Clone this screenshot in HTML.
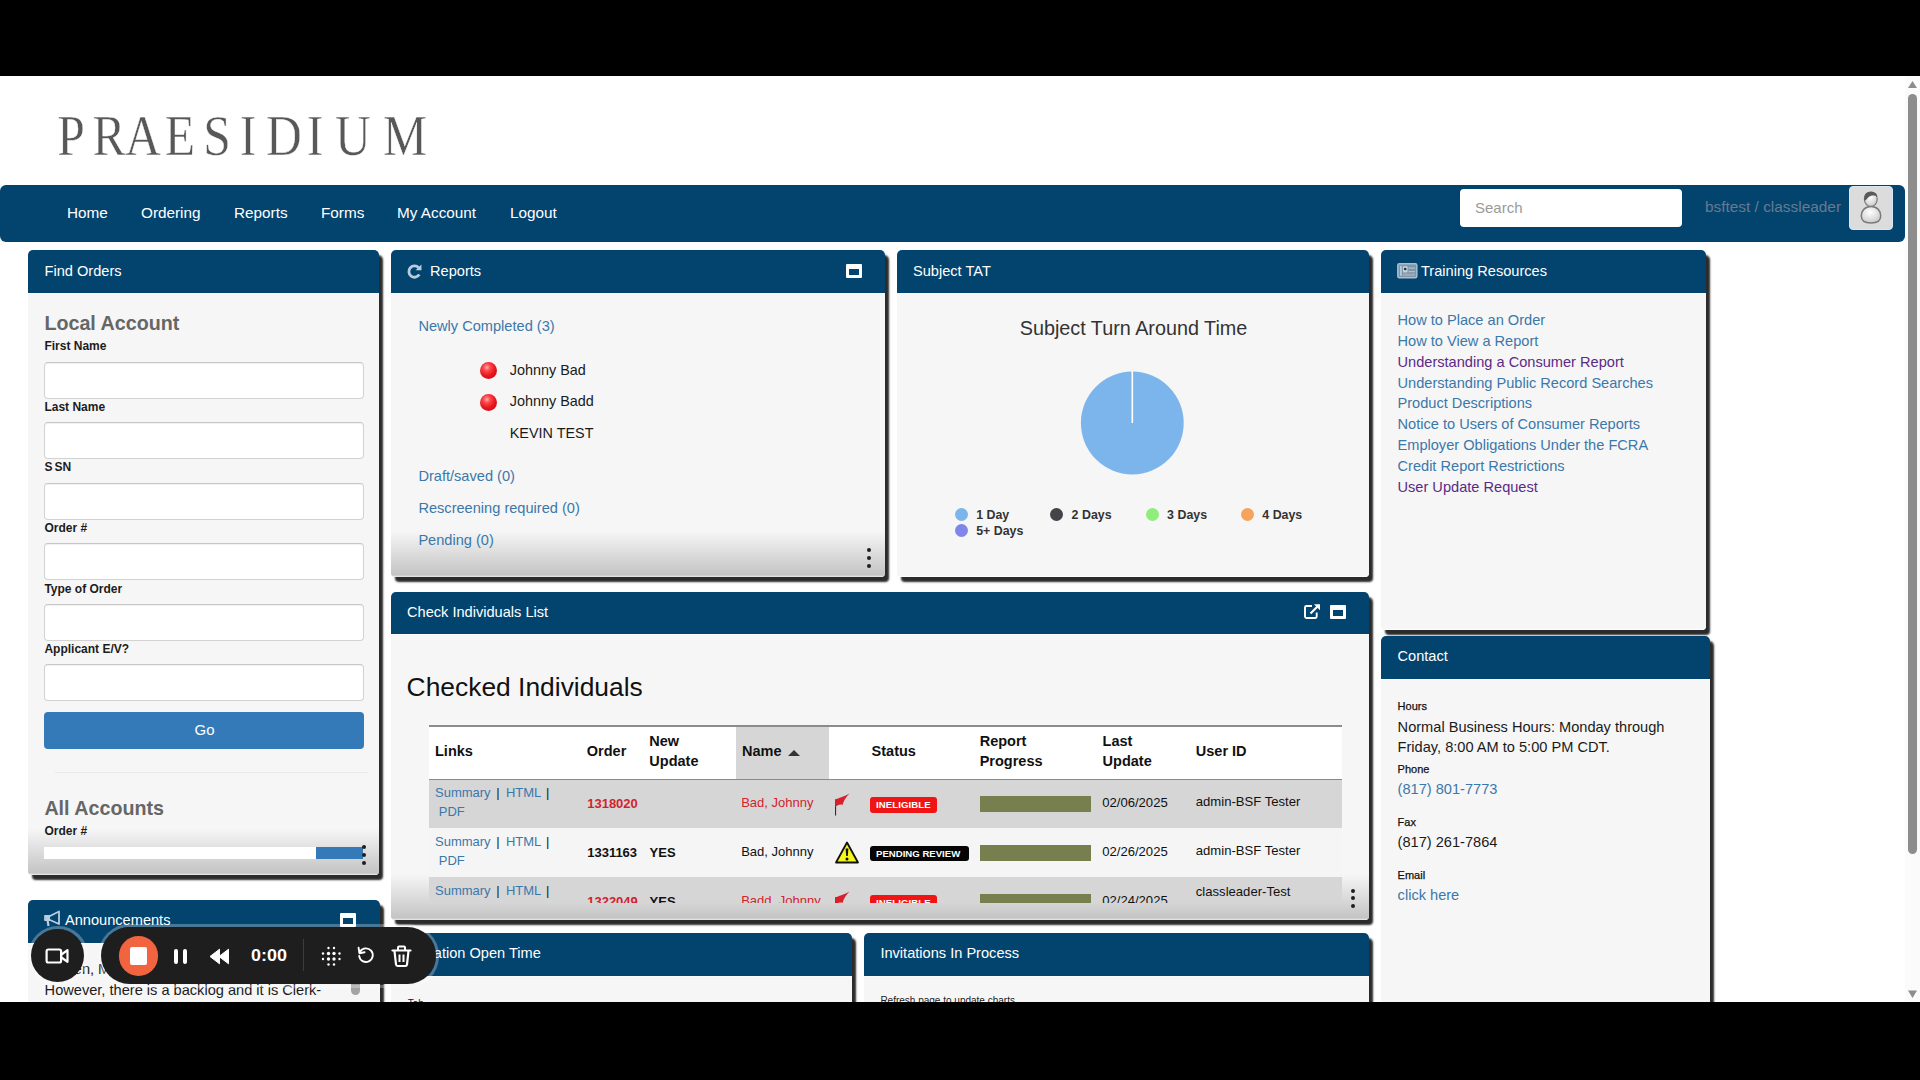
<!DOCTYPE html><html><head><meta charset="utf-8"><style>
html,body{margin:0;padding:0;background:#000;width:1920px;height:1080px;overflow:hidden;}
#pg{position:absolute;left:0;top:0;width:1920px;height:1080px;background:#fff;clip-path:inset(76px 0 78px 0);overflow:hidden;}
.t{position:absolute;white-space:nowrap;}
.r{position:absolute;box-sizing:border-box;}
svg{position:absolute;overflow:visible;}
</style></head><body><div id="pg">
<div class="t " style="left:71px;top:107.10px;font-size:57px;line-height:57px;color:#585858;font-weight:normal;font-family:'Liberation Serif', serif;transform:translateX(-50%) scaleX(0.87);-webkit-text-stroke:0.45px #fff;">P</div>
<div class="t " style="left:108.75px;top:107.10px;font-size:57px;line-height:57px;color:#585858;font-weight:normal;font-family:'Liberation Serif', serif;transform:translateX(-50%) scaleX(0.87);-webkit-text-stroke:0.45px #fff;">R</div>
<div class="t " style="left:143.15px;top:107.10px;font-size:57px;line-height:57px;color:#585858;font-weight:normal;font-family:'Liberation Serif', serif;transform:translateX(-50%) scaleX(0.87);-webkit-text-stroke:0.45px #fff;">A</div>
<div class="t " style="left:180px;top:107.10px;font-size:57px;line-height:57px;color:#585858;font-weight:normal;font-family:'Liberation Serif', serif;transform:translateX(-50%) scaleX(0.87);-webkit-text-stroke:0.45px #fff;">E</div>
<div class="t " style="left:217.25px;top:107.10px;font-size:57px;line-height:57px;color:#585858;font-weight:normal;font-family:'Liberation Serif', serif;transform:translateX(-50%) scaleX(0.87);-webkit-text-stroke:0.45px #fff;">S</div>
<div class="t " style="left:247.75px;top:107.10px;font-size:57px;line-height:57px;color:#585858;font-weight:normal;font-family:'Liberation Serif', serif;transform:translateX(-50%) scaleX(0.87);-webkit-text-stroke:0.45px #fff;">I</div>
<div class="t " style="left:284.2px;top:107.10px;font-size:57px;line-height:57px;color:#585858;font-weight:normal;font-family:'Liberation Serif', serif;transform:translateX(-50%) scaleX(0.87);-webkit-text-stroke:0.45px #fff;">D</div>
<div class="t " style="left:315.35px;top:107.10px;font-size:57px;line-height:57px;color:#585858;font-weight:normal;font-family:'Liberation Serif', serif;transform:translateX(-50%) scaleX(0.87);-webkit-text-stroke:0.45px #fff;">I</div>
<div class="t " style="left:352.5px;top:107.10px;font-size:57px;line-height:57px;color:#585858;font-weight:normal;font-family:'Liberation Serif', serif;transform:translateX(-50%) scaleX(0.87);-webkit-text-stroke:0.45px #fff;">U</div>
<div class="t " style="left:405.05px;top:107.10px;font-size:57px;line-height:57px;color:#585858;font-weight:normal;font-family:'Liberation Serif', serif;transform:translateX(-50%) scaleX(0.87);-webkit-text-stroke:0.45px #fff;">M</div>
<div class="r" style="left:0px;top:185px;width:1905px;height:57px;background:#03446f;border-radius:6px;"></div>
<div class="t " style="left:67px;top:204.85px;font-size:15.3px;line-height:15.3px;color:#fff;font-weight:normal;font-family:'Liberation Sans', sans-serif;">Home</div>
<div class="t " style="left:141px;top:204.85px;font-size:15.3px;line-height:15.3px;color:#fff;font-weight:normal;font-family:'Liberation Sans', sans-serif;">Ordering</div>
<div class="t " style="left:234px;top:204.85px;font-size:15.3px;line-height:15.3px;color:#fff;font-weight:normal;font-family:'Liberation Sans', sans-serif;">Reports</div>
<div class="t " style="left:321px;top:204.85px;font-size:15.3px;line-height:15.3px;color:#fff;font-weight:normal;font-family:'Liberation Sans', sans-serif;">Forms</div>
<div class="t " style="left:397px;top:204.85px;font-size:15.3px;line-height:15.3px;color:#fff;font-weight:normal;font-family:'Liberation Sans', sans-serif;">My Account</div>
<div class="t " style="left:510px;top:204.85px;font-size:15.3px;line-height:15.3px;color:#fff;font-weight:normal;font-family:'Liberation Sans', sans-serif;">Logout</div>
<div class="r" style="left:1460px;top:189px;width:222px;height:38px;background:#fff;border-radius:4px;"></div>
<div class="t " style="left:1475px;top:200.00px;font-size:15px;line-height:15px;color:#9a9a9a;font-weight:normal;font-family:'Liberation Sans', sans-serif;">Search</div>
<div class="t " style="left:1705px;top:198.80px;font-size:15.4px;line-height:15.4px;color:#677a8e;font-weight:normal;font-family:'Liberation Sans', sans-serif;">bsftest / classleader</div>
<div class="r" style="left:1849px;top:186px;width:44px;height:44px;background:#dcdcdc;border:1.5px solid #d6e8f7;border-radius:4px;"></div>
<svg style="left:1849px;top:186px" width="44" height="44" viewBox="0 0 44 44">
<defs><radialGradient id="bg1" cx="45%" cy="35%" r="70%"><stop offset="0" stop-color="#ffffff"/><stop offset="1" stop-color="#c8c8c8"/></radialGradient></defs>
<path d="M22 20.5 C15.5 20.5 12.3 25 12.3 30 C12.3 35 15.5 37 22 37 C28.5 37 31.7 35 31.7 30 C31.7 25 28.5 20.5 22 20.5 Z" fill="url(#bg1)" stroke="#7a7a7a" stroke-width="1.5"/>
<ellipse cx="21.8" cy="13.2" rx="6.4" ry="7.2" fill="url(#bg1)" stroke="#7a7a7a" stroke-width="1.2"/>
<path d="M15.3 14.5 C14.5 8.5 17.5 5.8 21.5 5.8 C25.5 5.8 28.5 7.5 28.2 11 C26 9.2 22 9 19.5 11.2 C18 12.5 17 14.5 15.3 14.5 Z" fill="#5a5a5a"/>
</svg>
<div class="r" style="left:28px;top:250px;width:351px;height:625px;border-radius:5px 5px 4px 4px;box-shadow:4px 5px 2px #2b2b2b;background:linear-gradient(to bottom, #f6f6f6 0, #f6f6f6 calc(100% - 46px), #c4c4c4 calc(100% - 2px), #ececec 100%);"></div>
<div class="r" style="left:28px;top:250px;width:351px;height:43px;border-radius:5px 5px 0 0;background:#03446f;"></div>
<div class="r" style="left:28px;top:293px;width:351px;height:1px;background:#fafafa;"></div>
<div class="r" style="left:391px;top:250px;width:494px;height:327px;border-radius:5px 5px 4px 4px;box-shadow:4px 5px 2px #2b2b2b;background:linear-gradient(to bottom, #f6f6f6 0, #f6f6f6 calc(100% - 46px), #c4c4c4 calc(100% - 2px), #ececec 100%);"></div>
<div class="r" style="left:391px;top:250px;width:494px;height:43px;border-radius:5px 5px 0 0;background:#03446f;"></div>
<div class="r" style="left:391px;top:293px;width:494px;height:1px;background:#fafafa;"></div>
<div class="r" style="left:897px;top:250px;width:472px;height:327px;border-radius:5px 5px 4px 4px;box-shadow:4px 5px 2px #2b2b2b;background:linear-gradient(to bottom, #f6f6f6 0, #f6f6f6 calc(100% - 1px), #fdfdfd calc(100% - 1px));"></div>
<div class="r" style="left:897px;top:250px;width:472px;height:43px;border-radius:5px 5px 0 0;background:#03446f;"></div>
<div class="r" style="left:897px;top:293px;width:472px;height:1px;background:#fafafa;"></div>
<div class="r" style="left:1381px;top:250px;width:325px;height:379.5px;border-radius:5px 5px 4px 4px;box-shadow:4px 5px 2px #2b2b2b;background:linear-gradient(to bottom, #f6f6f6 0, #f6f6f6 calc(100% - 1px), #fdfdfd calc(100% - 1px));"></div>
<div class="r" style="left:1381px;top:250px;width:325px;height:43px;border-radius:5px 5px 0 0;background:#03446f;"></div>
<div class="r" style="left:1381px;top:293px;width:325px;height:1px;background:#fafafa;"></div>
<div class="r" style="left:391px;top:592px;width:978px;height:328px;border-radius:5px 5px 4px 4px;box-shadow:4px 5px 2px #2b2b2b;background:linear-gradient(to bottom, #f6f6f6 0, #f6f6f6 calc(100% - 46px), #c4c4c4 calc(100% - 2px), #ececec 100%);"></div>
<div class="r" style="left:391px;top:592px;width:978px;height:42px;border-radius:5px 5px 0 0;background:#03446f;"></div>
<div class="r" style="left:391px;top:634px;width:978px;height:1px;background:#fafafa;"></div>
<div class="r" style="left:1381px;top:636px;width:329px;height:464px;border-radius:5px 5px 4px 4px;box-shadow:4px 5px 2px #2b2b2b;background:linear-gradient(to bottom, #f6f6f6 0, #f6f6f6 calc(100% - 1px), #fdfdfd calc(100% - 1px));"></div>
<div class="r" style="left:1381px;top:636px;width:329px;height:43px;border-radius:5px 5px 0 0;background:#03446f;"></div>
<div class="r" style="left:1381px;top:679px;width:329px;height:1px;background:#fafafa;"></div>
<div class="r" style="left:28px;top:900px;width:352px;height:200px;border-radius:5px 5px 4px 4px;box-shadow:4px 5px 2px #2b2b2b;background:linear-gradient(to bottom, #f6f6f6 0, #f6f6f6 calc(100% - 1px), #fdfdfd calc(100% - 1px));"></div>
<div class="r" style="left:28px;top:900px;width:352px;height:42.5px;border-radius:5px 5px 0 0;background:#03446f;"></div>
<div class="r" style="left:28px;top:942.5px;width:352px;height:1px;background:#fafafa;"></div>
<div class="r" style="left:391px;top:933px;width:461px;height:167px;border-radius:5px 5px 4px 4px;box-shadow:4px 5px 2px #2b2b2b;background:linear-gradient(to bottom, #f6f6f6 0, #f6f6f6 calc(100% - 1px), #fdfdfd calc(100% - 1px));"></div>
<div class="r" style="left:391px;top:933px;width:461px;height:42.5px;border-radius:5px 5px 0 0;background:#03446f;"></div>
<div class="r" style="left:391px;top:975.5px;width:461px;height:1px;background:#fafafa;"></div>
<div class="r" style="left:864px;top:933px;width:505px;height:167px;border-radius:5px 5px 4px 4px;box-shadow:4px 5px 2px #2b2b2b;background:linear-gradient(to bottom, #f6f6f6 0, #f6f6f6 calc(100% - 1px), #fdfdfd calc(100% - 1px));"></div>
<div class="r" style="left:864px;top:933px;width:505px;height:42.5px;border-radius:5px 5px 0 0;background:#03446f;"></div>
<div class="r" style="left:864px;top:975.5px;width:505px;height:1px;background:#fafafa;"></div>
<div class="t " style="left:44.5px;top:263.90px;font-size:14.6px;line-height:14.6px;color:#fff;font-weight:normal;font-family:'Liberation Sans', sans-serif;">Find Orders</div>
<div class="t " style="left:430px;top:264.20px;font-size:14.6px;line-height:14.6px;color:#fff;font-weight:normal;font-family:'Liberation Sans', sans-serif;">Reports</div>
<div class="t " style="left:913px;top:264.20px;font-size:14.6px;line-height:14.6px;color:#fff;font-weight:normal;font-family:'Liberation Sans', sans-serif;">Subject TAT</div>
<div class="t " style="left:1421px;top:264.20px;font-size:14.6px;line-height:14.6px;color:#fff;font-weight:normal;font-family:'Liberation Sans', sans-serif;">Training Resources</div>
<div class="t " style="left:407px;top:605.30px;font-size:14.6px;line-height:14.6px;color:#fff;font-weight:normal;font-family:'Liberation Sans', sans-serif;">Check Individuals List</div>
<div class="t " style="left:1397.5px;top:649.40px;font-size:14.6px;line-height:14.6px;color:#fff;font-weight:normal;font-family:'Liberation Sans', sans-serif;">Contact</div>
<div class="t " style="left:65px;top:913.30px;font-size:14.6px;line-height:14.6px;color:#fff;font-weight:normal;font-family:'Liberation Sans', sans-serif;">Announcements</div>
<div class="t " style="left:407px;top:946.30px;font-size:14.6px;line-height:14.6px;color:#fff;font-weight:normal;font-family:'Liberation Sans', sans-serif;">Invitation Open Time</div>
<div class="t " style="left:880.4px;top:946.30px;font-size:14.6px;line-height:14.6px;color:#fff;font-weight:normal;font-family:'Liberation Sans', sans-serif;">Invitations In Process</div>
<div class="t " style="left:44.4px;top:314.15px;font-size:19.7px;line-height:19.7px;color:#666;font-weight:bold;font-family:'Liberation Sans', sans-serif;">Local Account</div>
<div class="t " style="left:44.4px;top:340.00px;font-size:12px;line-height:12px;color:#1c1c1c;font-weight:bold;font-family:'Liberation Sans', sans-serif;">First Name</div>
<div class="t " style="left:44.4px;top:401.00px;font-size:12px;line-height:12px;color:#1c1c1c;font-weight:bold;font-family:'Liberation Sans', sans-serif;">Last Name</div>
<div class="t " style="left:44.4px;top:461.00px;font-size:12px;line-height:12px;color:#1c1c1c;font-weight:bold;font-family:'Liberation Sans', sans-serif;">S<span style="margin-left:2px">SN</span></div>
<div class="t " style="left:44.4px;top:521.50px;font-size:12px;line-height:12px;color:#1c1c1c;font-weight:bold;font-family:'Liberation Sans', sans-serif;">Order #</div>
<div class="t " style="left:44.4px;top:582.70px;font-size:12px;line-height:12px;color:#1c1c1c;font-weight:bold;font-family:'Liberation Sans', sans-serif;">Type of Order</div>
<div class="t " style="left:44.4px;top:642.90px;font-size:12px;line-height:12px;color:#1c1c1c;font-weight:bold;font-family:'Liberation Sans', sans-serif;">Applicant E/V?</div>
<div class="t " style="left:44.4px;top:825.00px;font-size:12px;line-height:12px;color:#1c1c1c;font-weight:bold;font-family:'Liberation Sans', sans-serif;">Order #</div>
<div class="r" style="left:44px;top:361.7px;width:319.5px;height:37px;background:#fff;border:1px solid #d2d2d2;border-top-color:#c6c6c6;border-radius:4px;box-shadow:inset 0 1px 1px rgba(0,0,0,.06);"></div>
<div class="r" style="left:44px;top:422.3px;width:319.5px;height:37px;background:#fff;border:1px solid #d2d2d2;border-top-color:#c6c6c6;border-radius:4px;box-shadow:inset 0 1px 1px rgba(0,0,0,.06);"></div>
<div class="r" style="left:44px;top:482.5px;width:319.5px;height:37px;background:#fff;border:1px solid #d2d2d2;border-top-color:#c6c6c6;border-radius:4px;box-shadow:inset 0 1px 1px rgba(0,0,0,.06);"></div>
<div class="r" style="left:44px;top:543px;width:319.5px;height:37px;background:#fff;border:1px solid #d2d2d2;border-top-color:#c6c6c6;border-radius:4px;box-shadow:inset 0 1px 1px rgba(0,0,0,.06);"></div>
<div class="r" style="left:44px;top:603.7px;width:319.5px;height:37px;background:#fff;border:1px solid #d2d2d2;border-top-color:#c6c6c6;border-radius:4px;box-shadow:inset 0 1px 1px rgba(0,0,0,.06);"></div>
<div class="r" style="left:44px;top:664.3px;width:319.5px;height:37px;background:#fff;border:1px solid #d2d2d2;border-top-color:#c6c6c6;border-radius:4px;box-shadow:inset 0 1px 1px rgba(0,0,0,.06);"></div>
<div class="r" style="left:44px;top:712px;width:319.5px;height:37px;background:#357ab8;border-radius:4px;"></div>
<div class="t " style="left:194.5px;top:721.80px;font-size:15px;line-height:15px;color:#fff;font-weight:normal;font-family:'Liberation Sans', sans-serif;">Go</div>
<div class="r" style="left:55px;top:772px;width:313px;height:1px;background:#e9e9e9;"></div>
<div class="t " style="left:44.4px;top:799.15px;font-size:19.7px;line-height:19.7px;color:#666;font-weight:bold;font-family:'Liberation Sans', sans-serif;">All Accounts</div>
<div class="r" style="left:44px;top:846.5px;width:272px;height:12px;background:#fff;"></div>
<div class="r" style="left:316px;top:846.5px;width:47px;height:12px;background:#357ab8;"></div>
<div class="r" style="left:361.7px;top:844.5px;width:4px;height:4px;background:#1e1e1e;border-radius:50%;"></div>
<div class="r" style="left:361.7px;top:852.6px;width:4px;height:4px;background:#1e1e1e;border-radius:50%;"></div>
<div class="r" style="left:361.7px;top:860.9px;width:4px;height:4px;background:#1e1e1e;border-radius:50%;"></div>
<div class="t " style="left:418.4px;top:319.40px;font-size:14.6px;line-height:14.6px;color:#3b78aa;font-weight:normal;font-family:'Liberation Sans', sans-serif;">Newly Completed (3)</div>
<div class="t " style="left:418.4px;top:468.70px;font-size:14.6px;line-height:14.6px;color:#3b78aa;font-weight:normal;font-family:'Liberation Sans', sans-serif;">Draft/saved (0)</div>
<div class="t " style="left:418.4px;top:500.70px;font-size:14.6px;line-height:14.6px;color:#3b78aa;font-weight:normal;font-family:'Liberation Sans', sans-serif;">Rescreening required (0)</div>
<div class="t " style="left:418.4px;top:532.50px;font-size:14.6px;line-height:14.6px;color:#3b78aa;font-weight:normal;font-family:'Liberation Sans', sans-serif;">Pending (0)</div>
<div class="r" style="left:479.7px;top:361.5px;width:17px;height:17px;border-radius:50%;background:radial-gradient(circle at 40% 32%, #ffb3b3 0, #ff4a4a 22%, #e8141e 55%, #b80a12 100%);"></div>
<div class="r" style="left:479.7px;top:393.5px;width:17px;height:17px;border-radius:50%;background:radial-gradient(circle at 40% 32%, #ffb3b3 0, #ff4a4a 22%, #e8141e 55%, #b80a12 100%);"></div>
<div class="t " style="left:509.75px;top:362.80px;font-size:14.4px;line-height:14.4px;color:#1a1a1a;font-weight:normal;font-family:'Liberation Sans', sans-serif;">Johnny Bad</div>
<div class="t " style="left:509.75px;top:393.80px;font-size:14.4px;line-height:14.4px;color:#1a1a1a;font-weight:normal;font-family:'Liberation Sans', sans-serif;">Johnny Badd</div>
<div class="t " style="left:509.75px;top:425.80px;font-size:14.4px;line-height:14.4px;color:#1a1a1a;font-weight:normal;font-family:'Liberation Sans', sans-serif;">KEVIN TEST</div>
<div class="r" style="left:867.3px;top:547.5px;width:4px;height:4px;background:#1e1e1e;border-radius:50%;"></div>
<div class="r" style="left:867.3px;top:555.6px;width:4px;height:4px;background:#1e1e1e;border-radius:50%;"></div>
<div class="r" style="left:867.3px;top:563.7px;width:4px;height:4px;background:#1e1e1e;border-radius:50%;"></div>
<div class="r" style="left:846px;top:264px;width:16px;height:13.5px;border:3px solid #fff;border-top-width:5px;border-radius:1px;"></div>
<svg style="left:405px;top:261.5px" width="19.5" height="19.5" viewBox="0 0 18 18"><path d="M13.2 11.6 A5.2 5.2 0 1 1 12.6 5.3" fill="none" stroke="#b9cde0" stroke-width="2.6"/><path d="M9.8 7.6 L15.2 7.6 L15.2 2.2 Z" fill="#b9cde0"/></svg>
<div class="t " style="left:1019.7px;top:319.10px;font-size:19.8px;line-height:19.8px;color:#333;font-weight:normal;font-family:'Liberation Sans', sans-serif;">Subject Turn Around Time</div>
<svg style="left:1080px;top:371px" width="106" height="106" viewBox="0 0 106 106"><circle cx="52.3" cy="52" r="51.4" fill="#7cb5ec"/><line x1="52.3" y1="52" x2="52.3" y2="0" stroke="#fff" stroke-width="1.6"/></svg>
<div class="r" style="left:954.9px;top:507.70000000000005px;width:13px;height:13px;border-radius:50%;background:#7cb5ec;"></div>
<div class="t " style="left:976.1999999999999px;top:508.90px;font-size:12.4px;line-height:12.4px;color:#333;font-weight:bold;font-family:'Liberation Sans', sans-serif;">1 Day</div>
<div class="r" style="left:1050.3px;top:507.70000000000005px;width:13px;height:13px;border-radius:50%;background:#434348;"></div>
<div class="t " style="left:1071.6px;top:508.90px;font-size:12.4px;line-height:12.4px;color:#333;font-weight:bold;font-family:'Liberation Sans', sans-serif;">2 Days</div>
<div class="r" style="left:1145.8px;top:507.70000000000005px;width:13px;height:13px;border-radius:50%;background:#90ed7d;"></div>
<div class="t " style="left:1167.1px;top:508.90px;font-size:12.4px;line-height:12.4px;color:#333;font-weight:bold;font-family:'Liberation Sans', sans-serif;">3 Days</div>
<div class="r" style="left:1241.0px;top:507.70000000000005px;width:13px;height:13px;border-radius:50%;background:#f7a35c;"></div>
<div class="t " style="left:1262.3px;top:508.90px;font-size:12.4px;line-height:12.4px;color:#333;font-weight:bold;font-family:'Liberation Sans', sans-serif;">4 Days</div>
<div class="r" style="left:954.9px;top:524.1px;width:13px;height:13px;border-radius:50%;background:#8085e9;"></div>
<div class="t " style="left:976.1999999999999px;top:525.30px;font-size:12.4px;line-height:12.4px;color:#333;font-weight:bold;font-family:'Liberation Sans', sans-serif;">5+ Days</div>
<div class="t " style="left:1397.5px;top:313.00px;font-size:14.6px;line-height:14.6px;color:#3b78aa;font-weight:normal;font-family:'Liberation Sans', sans-serif;">How to Place an Order</div>
<div class="t " style="left:1397.5px;top:334.20px;font-size:14.6px;line-height:14.6px;color:#3b78aa;font-weight:normal;font-family:'Liberation Sans', sans-serif;">How to View a Report</div>
<div class="t " style="left:1397.5px;top:354.60px;font-size:14.6px;line-height:14.6px;color:#5b2a86;font-weight:normal;font-family:'Liberation Sans', sans-serif;">Understanding a Consumer Report</div>
<div class="t " style="left:1397.5px;top:375.50px;font-size:14.6px;line-height:14.6px;color:#3b78aa;font-weight:normal;font-family:'Liberation Sans', sans-serif;">Understanding Public Record Searches</div>
<div class="t " style="left:1397.5px;top:396.40px;font-size:14.6px;line-height:14.6px;color:#3b78aa;font-weight:normal;font-family:'Liberation Sans', sans-serif;">Product Descriptions</div>
<div class="t " style="left:1397.5px;top:417.40px;font-size:14.6px;line-height:14.6px;color:#3b78aa;font-weight:normal;font-family:'Liberation Sans', sans-serif;">Notice to Users of Consumer Reports</div>
<div class="t " style="left:1397.5px;top:438.30px;font-size:14.6px;line-height:14.6px;color:#3b78aa;font-weight:normal;font-family:'Liberation Sans', sans-serif;">Employer Obligations Under the FCRA</div>
<div class="t " style="left:1397.5px;top:459.30px;font-size:14.6px;line-height:14.6px;color:#3b78aa;font-weight:normal;font-family:'Liberation Sans', sans-serif;">Credit Report Restrictions</div>
<div class="t " style="left:1397.5px;top:480.30px;font-size:14.6px;line-height:14.6px;color:#5b2a86;font-weight:normal;font-family:'Liberation Sans', sans-serif;">User Update Request</div>
<svg style="left:1397px;top:263px" width="21" height="16" viewBox="0 0 21 16"><rect x="0.8" y="0.8" width="19" height="14" rx="1.5" fill="#7f95a8" stroke="#a9bfd2" stroke-width="1.5"/><rect x="3.2" y="2.8" width="1.5" height="10" fill="#c4d3df"/><rect x="6" y="3.2" width="4.5" height="6.2" rx="1" fill="#c4d3df"/><circle cx="8.2" cy="6" r="1.3" fill="#1d3142"/><rect x="11.5" y="4.5" width="6.5" height="1.2" fill="#b0c0cf"/><rect x="11.5" y="8" width="6.5" height="1.2" fill="#b0c0cf"/><rect x="6" y="10.5" width="12" height="2.6" fill="#98aabb"/></svg>
<div class="t " style="left:406.6px;top:674.30px;font-size:26.4px;line-height:26.4px;color:#111;font-weight:normal;font-family:'Liberation Sans', sans-serif;">Checked Individuals</div>
<div class="r" style="left:429px;top:725px;width:913px;height:54.5px;background:#fff;"></div>
<div class="r" style="left:736.2px;top:725px;width:92.5px;height:54.5px;background:#d6d6d6;"></div>
<div class="r" style="left:429px;top:725px;width:913px;height:2px;background:#8c8c8c;"></div>
<div class="t " style="left:435px;top:744.05px;font-size:14.5px;line-height:14.5px;color:#111;font-weight:bold;font-family:'Liberation Sans', sans-serif;">Links</div>
<div class="t " style="left:586.8px;top:744.05px;font-size:14.5px;line-height:14.5px;color:#111;font-weight:bold;font-family:'Liberation Sans', sans-serif;">Order</div>
<div class="t " style="left:649.3px;top:734.05px;font-size:14.5px;line-height:14.5px;color:#111;font-weight:bold;font-family:'Liberation Sans', sans-serif;">New</div>
<div class="t " style="left:649.3px;top:753.95px;font-size:14.5px;line-height:14.5px;color:#111;font-weight:bold;font-family:'Liberation Sans', sans-serif;">Update</div>
<div class="t " style="left:742px;top:744.15px;font-size:14.5px;line-height:14.5px;color:#111;font-weight:bold;font-family:'Liberation Sans', sans-serif;">Name</div>
<svg style="left:788px;top:749px" width="12" height="8" viewBox="0 0 12 8"><path d="M0 7 L6 1 L12 7 Z" fill="#333"/></svg>
<div class="t " style="left:871.6px;top:744.05px;font-size:14.5px;line-height:14.5px;color:#111;font-weight:bold;font-family:'Liberation Sans', sans-serif;">Status</div>
<div class="t " style="left:979.7px;top:734.45px;font-size:14.5px;line-height:14.5px;color:#111;font-weight:bold;font-family:'Liberation Sans', sans-serif;">Report</div>
<div class="t " style="left:979.7px;top:754.15px;font-size:14.5px;line-height:14.5px;color:#111;font-weight:bold;font-family:'Liberation Sans', sans-serif;">Progress</div>
<div class="t " style="left:1102.6px;top:734.45px;font-size:14.5px;line-height:14.5px;color:#111;font-weight:bold;font-family:'Liberation Sans', sans-serif;">Last</div>
<div class="t " style="left:1102.6px;top:754.15px;font-size:14.5px;line-height:14.5px;color:#111;font-weight:bold;font-family:'Liberation Sans', sans-serif;">Update</div>
<div class="t " style="left:1195.8px;top:743.95px;font-size:14.5px;line-height:14.5px;color:#111;font-weight:bold;font-family:'Liberation Sans', sans-serif;">User ID</div>
<div class="r" style="left:429px;top:779px;width:913px;height:124px;overflow:hidden;">
<div class="r" style="left:0;top:0px;width:913px;height:49px;background:#d6d6d6;"></div>
<div class="t " style="left:6px;top:7.40px;font-size:13px;line-height:13px;color:#3b78aa;font-weight:normal;font-family:'Liberation Sans', sans-serif;">Summary</div>
<div class="t " style="left:67.19999999999999px;top:7.40px;font-size:13px;line-height:13px;color:#1a1a1a;font-weight:normal;font-family:'Liberation Sans', sans-serif;">|</div>
<div class="t " style="left:76.89999999999998px;top:7.40px;font-size:13px;line-height:13px;color:#3b78aa;font-weight:normal;font-family:'Liberation Sans', sans-serif;">HTML</div>
<div class="t " style="left:117.0px;top:7.40px;font-size:13px;line-height:13px;color:#1a1a1a;font-weight:normal;font-family:'Liberation Sans', sans-serif;">|</div>
<div class="t " style="left:9.800000000000011px;top:25.90px;font-size:13px;line-height:13px;color:#3b78aa;font-weight:normal;font-family:'Liberation Sans', sans-serif;">PDF</div>
<div class="t " style="left:158.20000000000005px;top:17.50px;font-size:13px;line-height:13px;color:#d2232e;font-weight:bold;font-family:'Liberation Sans', sans-serif;">1318020</div>
<div class="t " style="left:312.20000000000005px;top:16.80px;font-size:13px;line-height:13px;color:#d2232e;font-weight:normal;font-family:'Liberation Sans', sans-serif;">Bad, Johnny</div>
<svg style="left:405px;top:13.5px" width="17" height="23" viewBox="0 0 17 23"><path d="M1.6 22.5 L1.6 6.5" stroke="#2a1a1a" stroke-width="1"/><path d="M1 6.5 C5 5 9 4 15.5 0.5 C12 4 10 7 8.5 12 C6 11 3.5 12 1.2 14 Z" fill="#d8202a"/></svg>
<div class="r" style="left:441px;top:18px;width:67px;height:15.5px;background:#f01414;border-radius:3px;"></div>
<div class="t " style="left:447px;top:21.30px;font-size:9.6px;line-height:9.6px;color:#fff;font-weight:bold;font-family:'Liberation Sans', sans-serif;letter-spacing:0.1px;">INELIGIBLE</div>
<div class="r" style="left:550.7px;top:17px;width:111px;height:16px;background:#787f4f;"></div>
<div class="t " style="left:673.2px;top:16.95px;font-size:13.1px;line-height:13.1px;color:#111;font-weight:normal;font-family:'Liberation Sans', sans-serif;">02/06/2025</div>
<div class="t " style="left:766.8px;top:16.45px;font-size:13.1px;line-height:13.1px;color:#111;font-weight:normal;font-family:'Liberation Sans', sans-serif;">admin-BSF Tester</div>
<div class="r" style="left:0;top:49px;width:913px;height:49px;background:#f5f5f5;"></div>
<div class="t " style="left:6px;top:56.40px;font-size:13px;line-height:13px;color:#3b78aa;font-weight:normal;font-family:'Liberation Sans', sans-serif;">Summary</div>
<div class="t " style="left:67.19999999999999px;top:56.40px;font-size:13px;line-height:13px;color:#1a1a1a;font-weight:normal;font-family:'Liberation Sans', sans-serif;">|</div>
<div class="t " style="left:76.89999999999998px;top:56.40px;font-size:13px;line-height:13px;color:#3b78aa;font-weight:normal;font-family:'Liberation Sans', sans-serif;">HTML</div>
<div class="t " style="left:117.0px;top:56.40px;font-size:13px;line-height:13px;color:#1a1a1a;font-weight:normal;font-family:'Liberation Sans', sans-serif;">|</div>
<div class="t " style="left:9.800000000000011px;top:74.90px;font-size:13px;line-height:13px;color:#3b78aa;font-weight:normal;font-family:'Liberation Sans', sans-serif;">PDF</div>
<div class="t " style="left:158.20000000000005px;top:66.50px;font-size:13px;line-height:13px;color:#111;font-weight:bold;font-family:'Liberation Sans', sans-serif;">1331163</div>
<div class="t " style="left:220.60000000000002px;top:66.50px;font-size:13px;line-height:13px;color:#111;font-weight:bold;font-family:'Liberation Sans', sans-serif;">YES</div>
<div class="t " style="left:312.20000000000005px;top:65.80px;font-size:13px;line-height:13px;color:#111;font-weight:normal;font-family:'Liberation Sans', sans-serif;">Bad, Johnny</div>
<svg style="left:406px;top:62px" width="24" height="23" viewBox="0 0 24 23"><path d="M12 1.5 L23 21.5 L1 21.5 Z" fill="#f5f51e" stroke="#111" stroke-width="1.8" stroke-linejoin="round"/><path d="M10.6 7.5 L13.4 7.5 L12.8 15 L11.2 15 Z" fill="#111"/><circle cx="12" cy="18" r="1.5" fill="#111"/></svg>
<div class="r" style="left:441px;top:66.79999999999995px;width:99px;height:15.5px;background:#050505;border-radius:3px;"></div>
<div class="t " style="left:447px;top:69.90px;font-size:9.6px;line-height:9.6px;color:#fff;font-weight:bold;font-family:'Liberation Sans', sans-serif;letter-spacing:0px;">PENDING REVIEW</div>
<div class="r" style="left:550.7px;top:66px;width:111px;height:16px;background:#787f4f;"></div>
<div class="t " style="left:673.2px;top:65.95px;font-size:13.1px;line-height:13.1px;color:#111;font-weight:normal;font-family:'Liberation Sans', sans-serif;">02/26/2025</div>
<div class="t " style="left:766.8px;top:65.45px;font-size:13.1px;line-height:13.1px;color:#111;font-weight:normal;font-family:'Liberation Sans', sans-serif;">admin-BSF Tester</div>
<div class="r" style="left:0;top:98px;width:913px;height:49px;background:#d6d6d6;"></div>
<div class="t " style="left:6px;top:105.40px;font-size:13px;line-height:13px;color:#3b78aa;font-weight:normal;font-family:'Liberation Sans', sans-serif;">Summary</div>
<div class="t " style="left:67.19999999999999px;top:105.40px;font-size:13px;line-height:13px;color:#1a1a1a;font-weight:normal;font-family:'Liberation Sans', sans-serif;">|</div>
<div class="t " style="left:76.89999999999998px;top:105.40px;font-size:13px;line-height:13px;color:#3b78aa;font-weight:normal;font-family:'Liberation Sans', sans-serif;">HTML</div>
<div class="t " style="left:117.0px;top:105.40px;font-size:13px;line-height:13px;color:#1a1a1a;font-weight:normal;font-family:'Liberation Sans', sans-serif;">|</div>
<div class="t " style="left:9.800000000000011px;top:123.90px;font-size:13px;line-height:13px;color:#3b78aa;font-weight:normal;font-family:'Liberation Sans', sans-serif;">PDF</div>
<div class="t " style="left:158.20000000000005px;top:115.50px;font-size:13px;line-height:13px;color:#d2232e;font-weight:bold;font-family:'Liberation Sans', sans-serif;">1322049</div>
<div class="t " style="left:220.60000000000002px;top:115.50px;font-size:13px;line-height:13px;color:#111;font-weight:bold;font-family:'Liberation Sans', sans-serif;">YES</div>
<div class="t " style="left:312.20000000000005px;top:114.80px;font-size:13px;line-height:13px;color:#d2232e;font-weight:normal;font-family:'Liberation Sans', sans-serif;">Badd, Johnny</div>
<svg style="left:405px;top:111.5px" width="17" height="23" viewBox="0 0 17 23"><path d="M1.6 22.5 L1.6 6.5" stroke="#2a1a1a" stroke-width="1"/><path d="M1 6.5 C5 5 9 4 15.5 0.5 C12 4 10 7 8.5 12 C6 11 3.5 12 1.2 14 Z" fill="#d8202a"/></svg>
<div class="r" style="left:441px;top:116px;width:67px;height:15.5px;background:#f01414;border-radius:3px;"></div>
<div class="t " style="left:447px;top:119.30px;font-size:9.6px;line-height:9.6px;color:#fff;font-weight:bold;font-family:'Liberation Sans', sans-serif;letter-spacing:0.1px;">INELIGIBLE</div>
<div class="r" style="left:550.7px;top:115px;width:111px;height:16px;background:#787f4f;"></div>
<div class="t " style="left:673.2px;top:114.95px;font-size:13.1px;line-height:13.1px;color:#111;font-weight:normal;font-family:'Liberation Sans', sans-serif;">02/24/2025</div>
<div class="t " style="left:766.8px;top:105.95px;font-size:13.1px;line-height:13.1px;color:#111;font-weight:normal;font-family:'Liberation Sans', sans-serif;">classleader-Test</div>
</div>
<div class="r" style="left:429px;top:778.6px;width:913px;height:1.4px;background:#8a8a8a;"></div>
<div class="r" style="left:1351.4px;top:888.6px;width:4px;height:4px;background:#1e1e1e;border-radius:50%;"></div>
<div class="r" style="left:1351.4px;top:896px;width:4px;height:4px;background:#1e1e1e;border-radius:50%;"></div>
<div class="r" style="left:1351.4px;top:904px;width:4px;height:4px;background:#1e1e1e;border-radius:50%;"></div>
<svg style="left:1303px;top:603px" width="19" height="17" viewBox="0 0 19 17"><path d="M9 3 L3.5 3 Q2 3 2 4.5 L2 13.5 Q2 15 3.5 15 L12.2 15 Q13.7 15 13.7 13.5 L13.7 9.5" fill="none" stroke="#fff" stroke-width="1.9"/><path d="M7.5 10.5 L14.5 3.5" stroke="#fff" stroke-width="2.2"/><path d="M11 1.2 L17 1.2 L17 7.2 Z" fill="#fff"/></svg>
<div class="r" style="left:1330px;top:605.4px;width:16px;height:13.6px;border:3px solid #fff;border-top-width:5px;border-radius:1px;"></div>
<div class="t " style="left:1397.6px;top:701.20px;font-size:11px;line-height:11px;color:#111;font-weight:normal;font-family:'Liberation Sans', sans-serif;-webkit-text-stroke:0.25px #111;">Hours</div>
<div class="t " style="left:1397.6px;top:719.70px;font-size:14.6px;line-height:14.6px;color:#1a1a1a;font-weight:normal;font-family:'Liberation Sans', sans-serif;">Normal Business Hours: Monday through</div>
<div class="t " style="left:1397.6px;top:740.10px;font-size:14.6px;line-height:14.6px;color:#1a1a1a;font-weight:normal;font-family:'Liberation Sans', sans-serif;">Friday, 8:00 AM to 5:00 PM CDT.</div>
<div class="t " style="left:1397.6px;top:764.20px;font-size:11px;line-height:11px;color:#111;font-weight:normal;font-family:'Liberation Sans', sans-serif;-webkit-text-stroke:0.25px #111;">Phone</div>
<div class="t " style="left:1397.6px;top:781.70px;font-size:14.6px;line-height:14.6px;color:#3b78aa;font-weight:normal;font-family:'Liberation Sans', sans-serif;">(817) 801-7773</div>
<div class="t " style="left:1397.6px;top:817.30px;font-size:11px;line-height:11px;color:#111;font-weight:normal;font-family:'Liberation Sans', sans-serif;-webkit-text-stroke:0.25px #111;">Fax</div>
<div class="t " style="left:1397.6px;top:835.00px;font-size:14.6px;line-height:14.6px;color:#1a1a1a;font-weight:normal;font-family:'Liberation Sans', sans-serif;">(817) 261-7864</div>
<div class="t " style="left:1397.6px;top:870.30px;font-size:11px;line-height:11px;color:#111;font-weight:normal;font-family:'Liberation Sans', sans-serif;-webkit-text-stroke:0.25px #111;">Email</div>
<div class="t " style="left:1397.6px;top:887.90px;font-size:14.6px;line-height:14.6px;color:#3b78aa;font-weight:normal;font-family:'Liberation Sans', sans-serif;">click here</div>
<div class="t " style="left:44.6px;top:962.20px;font-size:14.6px;line-height:14.6px;color:#1a1a1a;font-weight:normal;font-family:'Liberation Sans', sans-serif;">Kristen, Mike</div>
<div class="t " style="left:44.6px;top:983.30px;font-size:14.6px;line-height:14.6px;color:#1a1a1a;font-weight:normal;font-family:'Liberation Sans', sans-serif;">However, there is a backlog and it is Clerk-</div>
<div class="r" style="left:351px;top:978px;width:9px;height:16.5px;background:#a3a3a3;border-radius:4.5px;"></div>
<div class="r" style="left:340px;top:913px;width:15.6px;height:13.5px;border:3px solid #fff;border-top-width:5px;border-radius:1px;"></div>
<svg style="left:43px;top:910px" width="20" height="18" viewBox="0 0 20 18"><path d="M2 6 L7 6 L16 1.5 L16 14 L7 10 L2 10 Z" fill="none" stroke="#b9cde0" stroke-width="1.8" stroke-linejoin="round"/><path d="M3 6 L7 6 L7 10 L3 10 Z" fill="#b9cde0"/><path d="M4.5 10 L5.5 16" stroke="#b9cde0" stroke-width="2.2"/></svg>
<div class="t " style="left:880.4px;top:995.80px;font-size:10px;line-height:10px;color:#1a1a1a;font-weight:normal;font-family:'Liberation Sans', sans-serif;">Refresh page to update charts</div>
<div class="t " style="left:407.8px;top:999.00px;font-size:10px;line-height:10px;color:#1a1a1a;font-weight:normal;font-family:'Liberation Sans', sans-serif;">Tab</div>
<div class="r" style="left:1905px;top:76px;width:15px;height:926px;background:#fbfbfb;"></div>
<svg style="left:1905px;top:76px" width="15" height="926" viewBox="0 0 15 926"><path d="M3 12 L7.5 5 L12 12 Z" fill="#8c8c8c"/><path d="M3 914.5 L7.5 922 L12 914.5 Z" fill="#8c8c8c"/></svg>
<div class="r" style="left:1908px;top:94px;width:9px;height:760px;background:#8d8d8d;border-radius:4.5px;"></div>
<div class="r" style="left:27.6px;top:925.5px;width:60px;height:60px;border-radius:50%;border:3px solid rgba(255,255,255,0.28);"></div>
<div class="r" style="left:31.1px;top:929px;width:53px;height:53px;border-radius:50%;background:#1e1e1e;"></div>
<div class="r" style="left:97.5px;top:923.5px;width:341.5px;height:64px;border-radius:32px;border:3.5px solid rgba(255,255,255,0.28);"></div>
<div class="r" style="left:101px;top:927px;width:334.6px;height:57px;border-radius:28.5px;background:#1e1e1e;"></div>
<svg style="left:45px;top:947px" width="25" height="18" viewBox="0 0 25 18"><rect x="1.6" y="2.5" width="14.5" height="13" rx="1.8" fill="none" stroke="#fff" stroke-width="2.2"/><path d="M16.5 7.5 L22.5 3.2 L22.5 14.8 L16.5 10.5" fill="none" stroke="#fff" stroke-width="2.2" stroke-linejoin="round"/></svg>
<div class="r" style="left:118.7px;top:936.3px;width:39.4px;height:39.4px;border-radius:50%;background:#f26440;"></div>
<div class="r" style="left:129.75px;top:946.9px;width:17.5px;height:18px;background:#fff;border-radius:2px;"></div>
<div class="r" style="left:173.5px;top:948.5px;width:4.8px;height:15.3px;background:#fff;border-radius:2.4px;"></div>
<div class="r" style="left:182.5px;top:948.5px;width:4.8px;height:15.3px;background:#fff;border-radius:2.4px;"></div>
<svg style="left:209px;top:948px" width="22" height="17" viewBox="0 0 22 17"><path d="M1 8.5 L10.5 1.2 L10.5 15.8 Z M10 8.5 L19.5 1.2 L19.5 15.8 Z" fill="#fff" stroke="#fff" stroke-width="1" stroke-linejoin="round"/></svg>
<div class="t " style="left:250.6px;top:947.50px;font-size:16px;line-height:16px;color:#fff;font-weight:bold;font-family:'Liberation Sans', sans-serif;transform:scaleX(1.12);transform-origin:0 0;">0:00</div>
<div class="r" style="left:303px;top:939.4px;width:1px;height:31.6px;background:#3d3d3d;"></div>
<svg style="left:321px;top:946px" width="21" height="21" viewBox="0 0 21 21"><circle cx="7.5" cy="2" r="1.2" fill="#fff"/><circle cx="13" cy="2" r="1.2" fill="#fff"/><circle cx="2" cy="7.5" r="1.2" fill="#fff"/><circle cx="7.5" cy="7.5" r="1.7" fill="#fff"/><circle cx="13" cy="7.5" r="1.7" fill="#fff"/><circle cx="18.5" cy="7.5" r="1.2" fill="#fff"/><circle cx="2" cy="13" r="1.2" fill="#fff"/><circle cx="7.5" cy="13" r="1.7" fill="#fff"/><circle cx="13" cy="13" r="1.7" fill="#fff"/><circle cx="18.5" cy="13" r="1.2" fill="#fff"/><circle cx="7.5" cy="18.5" r="1.2" fill="#fff"/><circle cx="13" cy="18.5" r="1.2" fill="#fff"/></svg>
<svg style="left:356px;top:945px" width="20" height="20" viewBox="0 0 20 20"><path d="M4.2 6.5 A6.8 6.8 0 1 1 3.2 11" fill="none" stroke="#fff" stroke-width="1.9" stroke-linecap="round"/><path d="M2.6 2.8 L3.4 8.2 L8.6 7.2" fill="none" stroke="#fff" stroke-width="1.9" stroke-linecap="round" stroke-linejoin="round"/></svg>
<svg style="left:391px;top:945px" width="21" height="23" viewBox="0 0 21 23"><path d="M1.5 5.5 L19.5 5.5" stroke="#fff" stroke-width="2.2" stroke-linecap="round"/><path d="M7 5 L7 2.5 Q7 1.5 8 1.5 L13 1.5 Q14 1.5 14 2.5 L14 5" fill="none" stroke="#fff" stroke-width="2"/><path d="M3.5 6 L5 19.5 Q5.2 21 6.7 21 L14.3 21 Q15.8 21 16 19.5 L17.5 6" fill="none" stroke="#fff" stroke-width="2.2"/><path d="M8.5 9.5 L8.5 17 M12.5 9.5 L12.5 17" stroke="#fff" stroke-width="2"/></svg>
</div></body></html>
